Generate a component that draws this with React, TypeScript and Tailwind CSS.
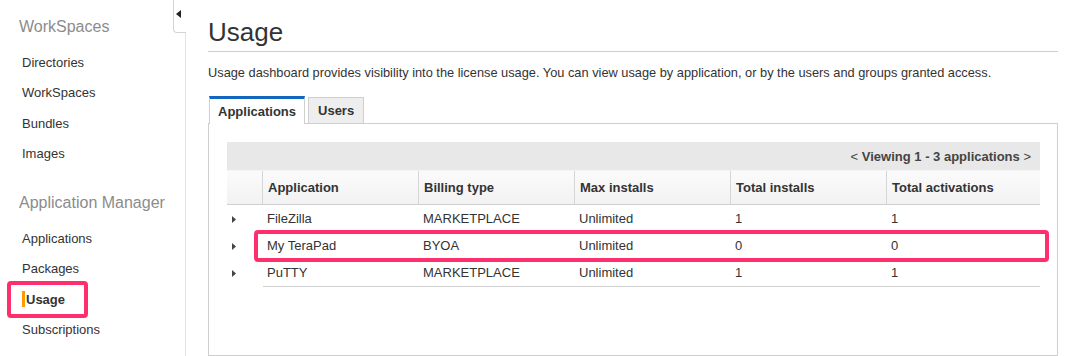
const font = { fontFamily: '"Liberation Sans", Arial, sans-serif' }

const groups = [
  { title: 'WorkSpaces', items: ['Directories', 'WorkSpaces', 'Bundles', 'Images'] },
  { title: 'Application Manager', items: ['Applications', 'Packages', 'Usage', 'Subscriptions'] },
]

const columns = ['Application', 'Billing type', 'Max installs', 'Total installs', 'Total activations']

const rows = [
  { name: 'FileZilla', billing: 'MARKETPLACE', max: 'Unlimited', installs: '1', activations: '1' },
  { name: 'My TeraPad', billing: 'BYOA', max: 'Unlimited', installs: '0', activations: '0', marked: true },
  { name: 'PuTTY', billing: 'MARKETPLACE', max: 'Unlimited', installs: '1', activations: '1' },
]

const grid = 'grid grid-cols-[35px_156px_156px_156px_156px_154px]'

function Sidebar() {
  return (
    <div className="flex shrink-0">
      <div className="w-[173px] pt-[17px]">
        {groups.map((g, gi) => (
          <div key={g.title} className={gi > 0 ? 'mt-[24px]' : ''}>
            <div className="whitespace-nowrap pl-[19px] text-[16px] leading-[20px] text-[#8c8c8c]">{g.title}</div>
            <div className="mt-[10px]">
              {g.items.map((item) => {
                const active = item === 'Usage' && gi === 1
                return (
                  <div key={item} className="relative flex h-[30.5px] items-center pl-[22px] text-[13px] text-[#333]">
                    {active ? (
                      <>
                        <span className="mr-[1px] h-[16px] w-[3px] bg-[#ff9900]" />
                        <span className="font-bold">Usage</span>
                        <div className="absolute left-[7px] top-[-3px] h-[37px] w-[81px] rounded-[4px] border-[4px] border-[#ff2f6d]" />
                      </>
                    ) : (
                      item
                    )}
                  </div>
                )
              })}
            </div>
          </div>
        ))}
      </div>
      <div className="flex w-[13px] flex-col">
        <div className="flex h-[33px] items-start justify-center rounded-bl-[4px] border-b border-l border-[#d5d5d5] pt-[10px]">
          <svg width="5" height="8" viewBox="0 0 5 8" className="mr-[3px]">
            <path d="M5 0 L0 4 L5 8 Z" fill="#222" />
          </svg>
        </div>
        <div className="flex-1 border-r border-[#e3e3e3]" />
      </div>
    </div>
  )
}

function Expander() {
  return (
    <svg width="4" height="7" viewBox="0 0 4 7">
      <path d="M0 0 L4 3.5 L0 7 Z" fill="#444" />
    </svg>
  )
}

function AppsTable() {
  return (
    <div className="w-[813px]">
      <div className="flex h-[28px] items-center justify-end bg-[#e8e8e8] pr-[9px] pt-[2px] text-[13px] text-[#444]">
        <span>&lt;&nbsp;</span>
        <span className="font-bold">Viewing 1 - 3 applications</span>
        <span>&nbsp;&gt;</span>
      </div>
      <div className={`${grid} h-[35px] border-t border-b border-t-[#f4f4f4] border-b-[#cfcfcf] bg-gradient-to-b from-[#fbfbfb] to-[#f2f2f2] text-[13px] font-bold text-[#333]`}>
        <div />
        {columns.map((c) => (
          <div key={c} className="flex items-center border-l border-[#d6d6d6] pl-[5px] pt-[1px]">
            {c}
          </div>
        ))}
      </div>
      {rows.map((r) => (
        <div key={r.name} className={`${grid} relative h-[27px] text-[13px] text-[#333]`}>
          <div className="flex items-center pl-[5px] pt-[1px]">
            <Expander />
          </div>
          {[r.name, r.billing, r.max, r.installs, r.activations].map((v, i) => (
            <div key={i} className="flex items-center pl-[5px] pt-[1px]">
              {v}
            </div>
          ))}
          {r.marked && (
            <div className="absolute left-[27px] right-[-9px] top-[-2px] bottom-[-3px] rounded-[4px] border-[4px] border-[#ff2f6d]" />
          )}
        </div>
      ))}
      <div className="ml-[36px] border-t border-[#d0d0d0]" />
    </div>
  )
}

export default function App() {
  return (
    <div className="flex h-[356px] w-[1078px] overflow-hidden bg-white" style={font}>
      <Sidebar />
      <div className="ml-[22px] flex w-[850px] flex-col pt-[17px]">
        <div className="border-b border-[#cfcfcf] pb-[4px] text-[26px] leading-[30px] text-[#333]">Usage</div>
        <p className="mt-[12px] text-[12.8px] leading-[18px] text-[#333]">
          Usage dashboard provides visibility into the license usage. You can view usage by application, or by the users and groups granted access.
        </p>
        <div className="mt-[14px] flex items-end pl-[1px]">
          <div className="relative z-10 -mb-px flex h-[28px] items-center border-x border-t-[3px] border-x-[#cfcfcf] border-t-[#1467bf] bg-white px-[8px] text-[13px] font-bold text-[#333]">
            Applications
          </div>
          <div className="ml-[3px] flex h-[26px] items-center border-x border-t border-[#cfcfcf] bg-[#eeeeee] px-[9px] text-[13px] font-bold text-[#333]">
            Users
          </div>
        </div>
        <div className="flex-1 border border-[#cfcfcf] px-[18px] pt-[18px]">
          <AppsTable />
        </div>
      </div>
    </div>
  )
}
